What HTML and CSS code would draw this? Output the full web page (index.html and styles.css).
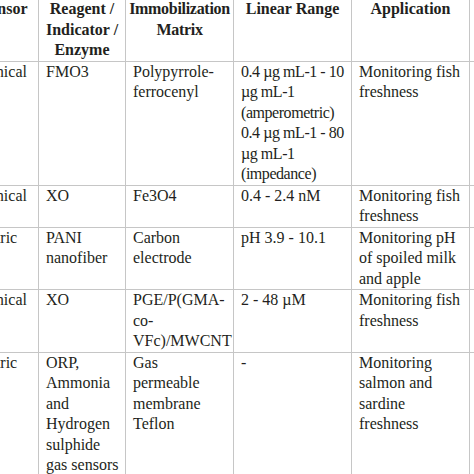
FILE: index.html
```html
<!DOCTYPE html>
<html>
<head>
<meta charset="utf-8">
<link rel="stylesheet" href="styles.css">
</head>
<body>
<table class="tbl">
  <colgroup>
    <col class="c1"><col class="c2"><col class="c3"><col class="c4"><col class="c5"><col class="c6">
  </colgroup>
  <thead>
    <tr>
      <th>Type of Sensor</th>
      <th>Reagent /<br>Indicator /<br>Enzyme</th>
      <th class="narrow">Immobilization<br>Matrix</th>
      <th>Linear Range</th>
      <th>Application</th>
      <th></th>
    </tr>
  </thead>
  <tbody>
    <tr class="r1">
      <td>Electrochemical</td>
      <td>FMO3</td>
      <td>Polypyrrole-<br>ferrocenyl</td>
      <td class="tight">0.4 µg mL-1 - 10<br>µg mL-1<br>(amperometric)<br>0.4 µg mL-1 - 80<br>µg mL-1<br>(impedance)</td>
      <td>Monitoring fish<br>freshness</td>
      <td></td>
    </tr>
    <tr>
      <td>Electrochemical</td>
      <td>XO</td>
      <td>Fe3O4</td>
      <td>0.4 - 2.4 nM</td>
      <td>Monitoring fish<br>freshness</td>
      <td></td>
    </tr>
    <tr>
      <td>Potentiometric</td>
      <td>PANI<br>nanofiber</td>
      <td>Carbon<br>electrode</td>
      <td>pH 3.9 - 10.1</td>
      <td>Monitoring pH<br>of spoiled milk<br>and apple</td>
      <td></td>
    </tr>
    <tr>
      <td>Electrochemical</td>
      <td>XO</td>
      <td>PGE/P(GMA-<br>co-<br>VFc)/MWCNT</td>
      <td>2 - 48 µM</td>
      <td>Monitoring fish<br>freshness</td>
      <td></td>
    </tr>
    <tr>
      <td>Potentiometric</td>
      <td>ORP,<br>Ammonia<br>and<br>Hydrogen<br>sulphide<br>gas sensors</td>
      <td>Gas<br>permeable<br>membrane<br>Teflon</td>
      <td>-</td>
      <td>Monitoring<br>salmon and<br>sardine<br>freshness</td>
      <td></td>
    </tr>
  </tbody>
</table>
</body>
</html>
```

FILE: styles.css
```css
html, body {
  margin: 0;
  padding: 0;
  background: #ffffff;
  overflow: hidden;
  width: 474px;
  height: 474px;
}

.tbl {
  border-collapse: collapse;
  table-layout: fixed;
  width: 644px;
  margin-left: -85px;
  margin-top: -3px;
  font-family: "Liberation Serif", "Times New Roman", serif;
  font-size: 16px;
  line-height: 20.5px;
  color: #231f20;
}

.c1 { width: 123px; }
.c2 { width: 87px; }
.c3 { width: 108px; }
.c4 { width: 118px; }
.c5 { width: 118px; }
.c6 { width: 90px; }

.tbl th,
.tbl td {
  border: 1px solid #c6c6c6;
  vertical-align: top;
  white-space: nowrap;
  overflow: hidden;
}

.tbl th {
  font-weight: bold;
  text-align: center;
  padding: 1px 0 0;
}

.tbl th.narrow {
  letter-spacing: -0.3px;
}

.tbl td {
  text-align: left;
  padding: 0 2px 0 7px;
}

.tbl td.tight {
  letter-spacing: -0.45px;
}
```
